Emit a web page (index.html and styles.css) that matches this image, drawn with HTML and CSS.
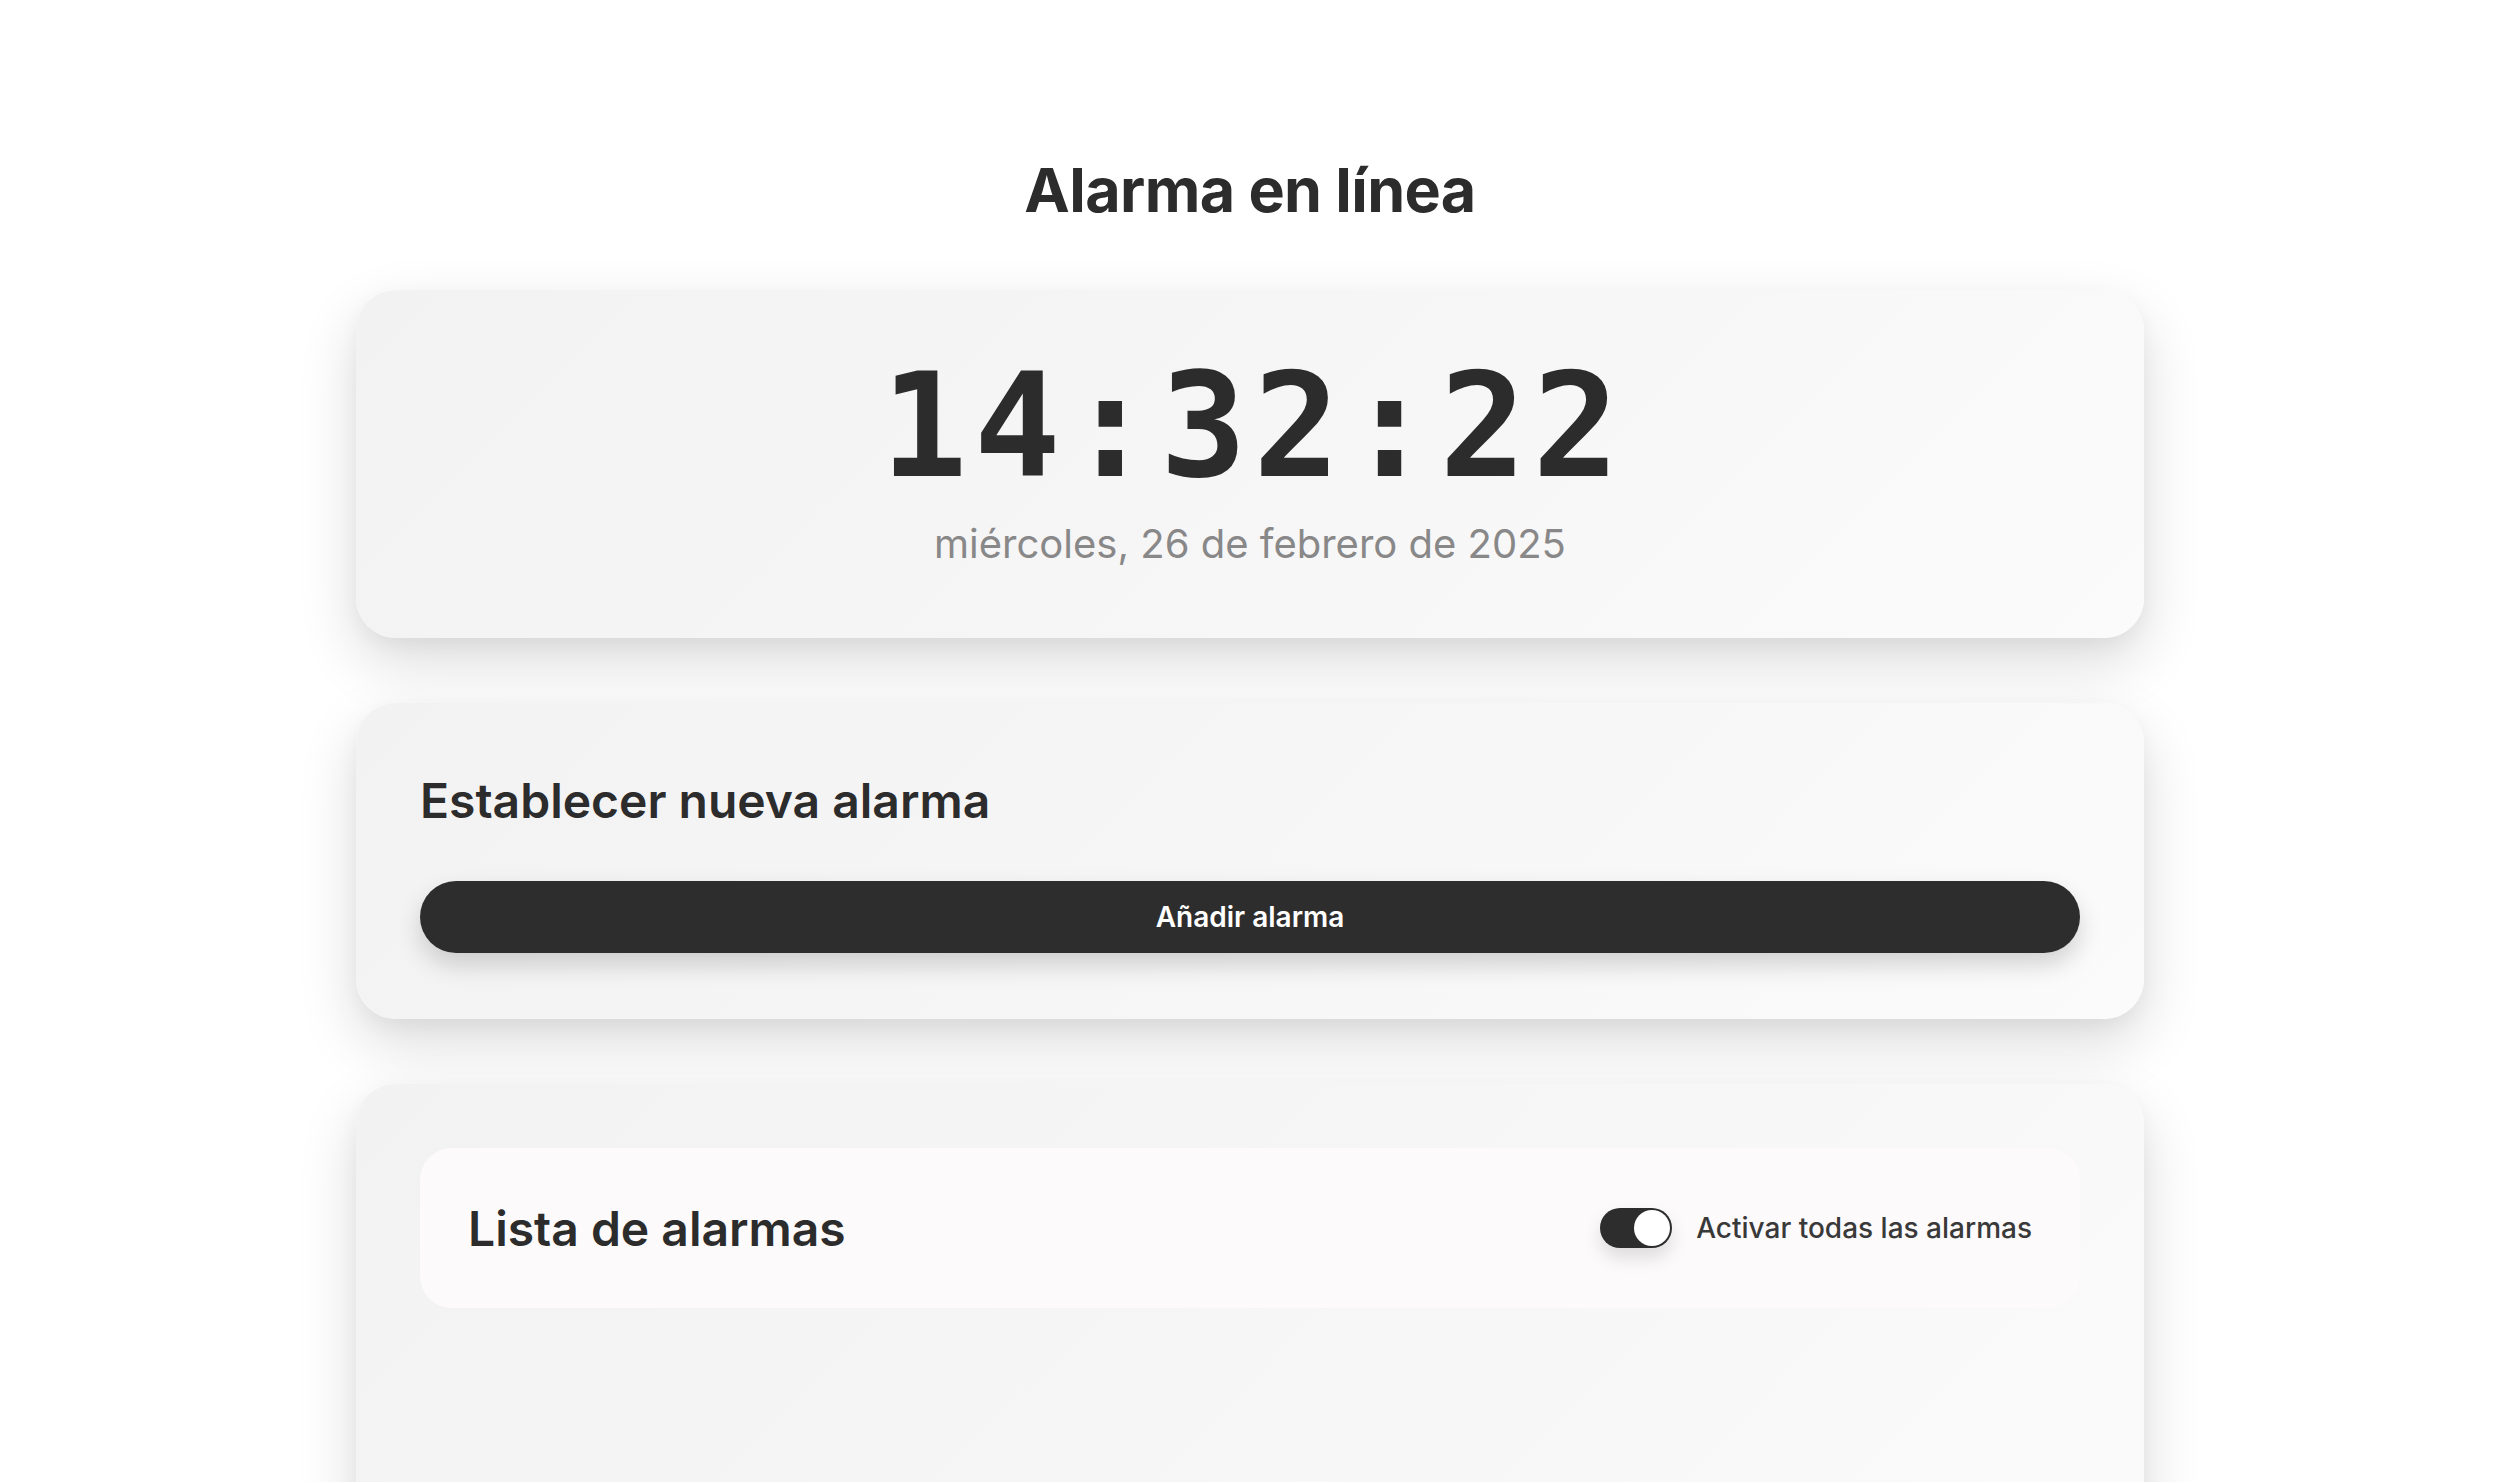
FILE: index.html
```
<!doctype html>
<html lang="es">
<head>
	<meta charset="UTF-8">
	<title>Alarma en línea</title>
	<link rel="stylesheet" href="styles.css">
</head>
<body>
	<div class="page">
		<h1 class="title">Alarma en línea</h1>

		<section class="card clock-card">
			<div class="clock">14:32:22</div>
			<div class="date">miércoles, 26 de febrero de 2025</div>
		</section>

		<section class="card">
			<h2 class="card-title">Establecer nueva alarma</h2>
			<button class="add-btn" type="button">Añadir alarma</button>
		</section>

		<section class="card list-card">
			<div class="list-head">
				<h2 class="card-title">Lista de alarmas</h2>
				<label class="all-toggle">
					<span class="switch on"><span class="knob"></span></span>
					<span class="switch-text">Activar todas las alarmas</span>
				</label>
			</div>
		</section>
	</div>
</body>
</html>
```

FILE: styles.css
```
*{
	box-sizing: border-box;
}
body{
	margin: 0;
	background: #fff;
	color: #2d2c2d;
	font-family: Inter, "Noto Sans", sans-serif;
}
.page{
	width: 1788px;
	margin: 0 auto;
	padding-top: 154px;
}
.title{
	margin: 0 0 63px;
	font-size: 61px;
	line-height: 1.2;
	font-weight: 700;
	text-align: center;
	letter-spacing: -0.01em;
}

.card{
	padding: 64px;
	margin-bottom: 65px;
	border-radius: 40px;
	background: linear-gradient(135deg, #f3f2f3 0%, #f7f6f7 50%, #fcfbfc 100%);
	box-shadow: 0 24px 60px rgba(0,0,0,0.14), 0 8px 20px rgba(0,0,0,0.04);
}

/* reloj */
.clock-card{
	text-align: center;
}
.clock{
	font-family: "DejaVu Sans Mono", monospace;
	font-weight: 700;
	font-size: 144px;
	line-height: 1;
	letter-spacing: 6.4px;
	margin-right: -6.4px;
}
.date{
	margin-top: 16px;
	font-size: 40px;
	line-height: 1.5;
	color: #898889;
}

.card-title{
	margin: 0;
	font-size: 48px;
	line-height: 1.4;
	font-weight: 600;
}
.add-btn{
	display: block;
	width: 100%;
	height: 72px;
	margin-top: 47px;
	margin-bottom: 2px;
	border: 0;
	border-radius: 36px;
	background: #2e2d2e;
	color: #fff;
	font-family: inherit;
	font-size: 28px;
	font-weight: 600;
	box-shadow: 0 12px 24px rgba(0,0,0,0.16);
}

/* lista */
.list-card{
	min-height: 560px;
	margin-bottom: 0;
}
.list-head{
	display: flex;
	align-items: center;
	justify-content: space-between;
	height: 160px;
	padding: 0 48px;
	border-radius: 32px;
	background: #fcfafb;
}
.all-toggle{
	display: flex;
	align-items: center;
	gap: 24px;
}
.switch{
	position: relative;
	width: 72px;
	height: 40px;
	border-radius: 20px;
	background: #2e2d2e;
	box-shadow: 0 10px 18px rgba(0,0,0,0.12);
}
.knob{
	position: absolute;
	top: 2px;
	right: 2px;
	width: 36px;
	height: 36px;
	border-radius: 50%;
	background: #fff;
}
.switch-text{
	font-size: 28px;
	font-weight: 500;
	color: #3a393a;
}
```
